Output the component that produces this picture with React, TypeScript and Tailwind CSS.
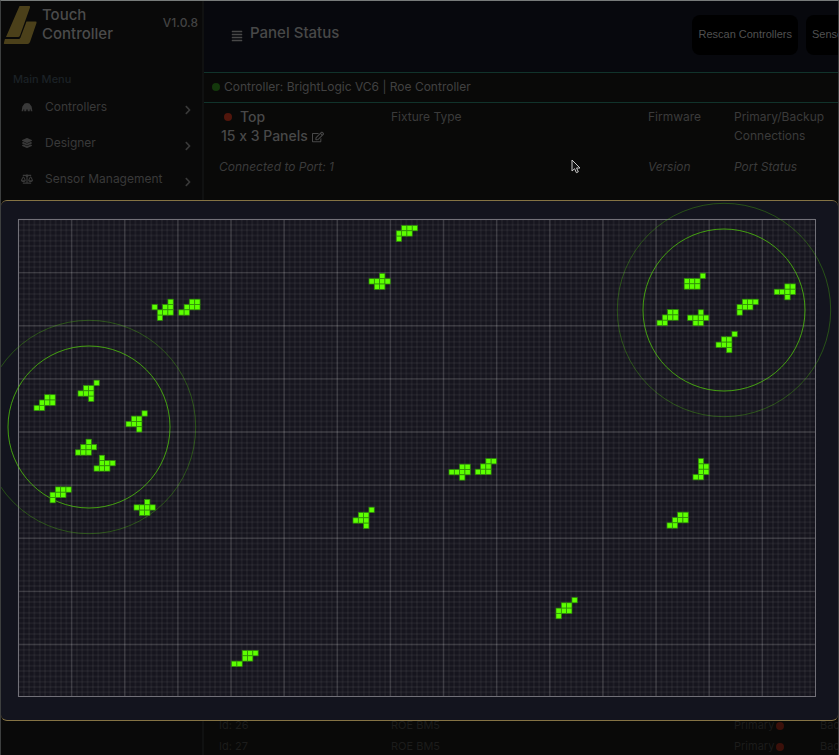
import React from 'react';
import { FaAlignJustify, FaBalanceScale, FaChevronRight, FaLayerGroup, FaRegEdit } from 'react-icons/fa';

interface Blob {
  x: number;
  y: number;
  rows: string[];
}

const PANEL = 53.13;
const CELL = 5.313;
const GRID_W = 797;
const GRID_H = 478;

// Touch footprints, one character per sensor pixel
const SLANT = ['..##', '.###', '##..'];
const SPARK = ['...#', '.##.', '###.', '..#.'];
const WEDGE = ['.###', '###.', '#...'];
const CROSS = ['..#.', '####', '.##.'];
const HAMMER = ['..##', '####', '..#.'];

const blobs: Blob[] = [
  { x: 16, y: 175.5, rows: SLANT },
  { x: 60, y: 161, rows: SPARK },
  { x: 108, y: 191.6, rows: SPARK },
  { x: 57.4, y: 220, rows: ['..#.', '.###', '###.'] },
  { x: 76, y: 236, rows: ['.#..', '.###', '###.'] },
  { x: 32, y: 267.7, rows: WEDGE },
  { x: 116, y: 280.3, rows: CROSS },
  { x: 666.2, y: 54, rows: ['...#', '###.', '###.'] },
  { x: 756.2, y: 64.7, rows: HAMMER },
  { x: 719, y: 80, rows: WEDGE },
  { x: 639, y: 90.4, rows: SLANT },
  { x: 669.6, y: 90.6, rows: CROSS },
  { x: 698, y: 112.3, rows: SPARK },
  { x: 378.3, y: 6.3, rows: WEDGE },
  { x: 351, y: 54.2, rows: CROSS },
  { x: 134, y: 80, rows: ['...#', '#.##', '.###', '.#..'] },
  { x: 160.8, y: 80, rows: SLANT },
  { x: 431, y: 245, rows: HAMMER },
  { x: 457.2, y: 239.4, rows: ['..##', '.##.', '###.'] },
  { x: 335, y: 288, rows: SPARK },
  { x: 675, y: 239.4, rows: ['.#.', '.##', '.##', '##.'] },
  { x: 649, y: 293, rows: SLANT },
  { x: 538, y: 378.3, rows: ['...#', '.##.', '###.', '#...'] },
  { x: 213.6, y: 431.3, rows: ['..###', '..##.', '##...'] },
];

const hands = [
  { x: 71, y: 208 },
  { x: 706, y: 91 },
];

const range = (n: number) => Array.from({ length: n }, (_, i) => i);

const TouchGrid: React.FC = () => (
  <svg viewBox="0 0 798 478" className="block w-full overflow-visible" role="img">
    <rect x="0" y="0" width={GRID_W} height={GRID_H} fill="#16151e" />
    <g stroke="#ffffff" strokeOpacity="0.042" strokeWidth="2">
      {range(150).map((i) => (
        <line key={`v${i}`} x1={0.5 + i * CELL} x2={0.5 + i * CELL} y1="0" y2={GRID_H} />
      ))}
      {range(90).map((i) => (
        <line key={`h${i}`} x1="0" x2={GRID_W} y1={0.5 + i * CELL} y2={0.5 + i * CELL} />
      ))}
    </g>
    <g stroke="#ffffff" strokeOpacity="0.12" strokeWidth="1.4">
      {range(14).map((i) => (
        <line key={`v${i}`} x1={0.5 + (i + 1) * PANEL} x2={0.5 + (i + 1) * PANEL} y1="0" y2={GRID_H} />
      ))}
      {range(8).map((i) => (
        <line key={`h${i}`} x1="0" x2={GRID_W} y1={0.5 + (i + 1) * PANEL} y2={0.5 + (i + 1) * PANEL} />
      ))}
    </g>
    <rect x="0.5" y="0.5" width={GRID_W} height={GRID_H - 1} fill="none" stroke="#717078" />
    {hands.map((hand) => (
      <g key={hand.x} fill="none" stroke="#52cc0b">
        <circle cx={hand.x} cy={hand.y} r="81" strokeOpacity="0.75" />
        <circle cx={hand.x} cy={hand.y} r="106.7" strokeOpacity="0.33" />
      </g>
    ))}
    {blobs.map((blob, b) => (
      <g key={b} fill="#5cff00" stroke="#2f8a0a" strokeWidth="0.7">
        {blob.rows.flatMap((row, r) =>
          row.split('').map((cell, c) =>
            cell === '#' ? (
              <rect key={`${r}-${c}`} x={blob.x + c * CELL} y={blob.y + 0.2 + r * CELL} width={CELL} height={CELL} />
            ) : null
          )
        )}
      </g>
    ))}
  </svg>
);

const HubIcon: React.FC<{ className?: string }> = ({ className }) => (
  <svg viewBox="0 0 12 10" className={className} fill="currentColor">
    <path d="M3.6 1.6Q6 .4 8.400 1.600l2.200 2.800.8 4.800H9.700V7.600h-.9v1.600H6.700V7.600H5.300v1.600H3.200V7.600h-.9v1.600H.6l.8-4.800z" />
  </svg>
);

const Logo: React.FC = () => (
  <svg viewBox="0 0 37 40" className="h-10 w-[37px] shrink-0" fill="#4b401a">
    <path d="M16.5 1H26q1.500 0 1 1.400L17 30.500q-.6 1.500-2 1.500H3z" />
    <path d="M23.500 16.500H32.500q1.500 0 1 1.400L27 37q-.8 2-2.500 2H1.500q-1 0-.6-1l1-4H15.500q1.400 0 1.900-1.300z" />
  </svg>
);

const menu = [
  { label: 'Controllers', icon: HubIcon },
  { label: 'Designer', icon: FaLayerGroup },
  { label: 'Sensor Management', icon: FaBalanceScale },
];

const Sidebar: React.FC = () => (
  <aside className="w-[203px] shrink-0 border-r-2 border-[#101111] bg-[#090909]">
    <div className="flex items-start pt-1 pl-0.5 pr-1">
      <Logo />
      <h1 className="ml-0.5 flex-1 text-[15px] leading-[19px] font-medium text-[#4b4b4b]">
        Touch
        <br />
        Controller
      </h1>
      <span className="pt-2 text-xs leading-5 font-medium text-[#434343]">V1.0.8</span>
    </div>
    <p className="mt-6 pl-3 text-[11px] leading-5 font-medium text-[#1b2126]">Main Menu</p>
    <nav>
      {menu.map(({ label, icon: Icon }) => (
        <a key={label} href="#" className="flex h-9 items-center pr-2.5 pl-5 text-[#393939]">
          <Icon className="h-2.5 w-3" />
          <span className="ml-3 flex-1 text-xs whitespace-nowrap">{label}</span>
          <FaChevronRight className="mt-1.5 h-2.5 w-2" />
        </a>
      ))}
    </nav>
  </aside>
);

const Columns: React.FC = () => (
  <colgroup>
    <col className="w-[172px]" />
    <col />
    <col className="w-[86px]" />
    <col className="w-[104px]" />
  </colgroup>
);

const Main: React.FC = () => (
  <main className="flex min-w-0 flex-1 flex-col bg-[#090908]">
    <header className="flex h-[72px] items-center justify-between border-b border-[#11332b] bg-[#07080d] pl-[27px]">
      <div className="flex items-center gap-[7px] pb-1.5 text-[#484848]">
        <FaAlignJustify className="mt-1 h-3 w-3" />
        <h2 className="text-[15px] font-medium">Panel Status</h2>
      </div>
      <div className="-mr-10 flex shrink-0 gap-2 pb-1 font-['Liberation_Sans',sans-serif] text-[11px] text-[#505050]">
        <button className="h-10 rounded-lg bg-black px-1.5 whitespace-nowrap">Rescan Controllers</button>
        <button className="h-10 w-[72px] rounded-lg bg-black px-1.5 text-left whitespace-nowrap">Sensor</button>
      </div>
    </header>
    <div className="flex h-[30px] items-center gap-1 border-b border-[#11332b] pb-0.5 pl-2 text-xs text-[#414141]">
      <span className="h-2 w-2 rounded-full bg-[#14380c]" />
      <span>Controller: BrightLogic VC6 | Roe Controller</span>
    </div>
    <div className="pl-[15px]">
      <table className="w-full table-fixed text-left text-xs leading-[19px] whitespace-nowrap text-[#3b3b3b]">
        <Columns />
        <thead>
          <tr className="align-top">
            <th className="pt-1 text-sm leading-[19px] font-medium text-[#484848]">
              <span className="flex items-center pl-[5px]">
                <span className="mr-2 h-2 w-2 rounded-full bg-[#51160c]" />
                Top
              </span>
              <span className="flex items-center gap-1 pl-0.5">
                15 x 3 Panels
                <FaRegEdit className="mt-0.5 h-3 w-3" />
              </span>
            </th>
            <th className="pt-1 font-normal">Fixture Type</th>
            <th className="pt-1 font-normal">Firmware</th>
            <th className="pt-1 font-normal">
              Primary/Backup
              <br />
              Connections
            </th>
          </tr>
        </thead>
        <tbody>
          <tr className="italic">
            <td className="pt-3">Connected to Port: 1</td>
            <td />
            <td className="pt-3">Version</td>
            <td className="pt-3">Port Status</td>
          </tr>
        </tbody>
      </table>
    </div>
    <div className="-mb-0.5 mt-auto pl-[15px]">
      <table className="w-full table-fixed text-left text-[11px] leading-[21px] whitespace-nowrap text-[#1c1c1b]">
        <Columns />
        <tbody>
          {[26, 27].map((id) => (
            <tr key={id}>
              <td>Id: {id}</td>
              <td>ROE BM5</td>
              <td />
              <td>
                <span className="flex items-center">
                  <span className="w-[42px] shrink-0">Primary</span>
                  <span className="mr-9 h-2 w-2 shrink-0 rounded-full bg-[#3b100a]" />
                  Backup
                </span>
              </td>
            </tr>
          ))}
        </tbody>
      </table>
    </div>
  </main>
);

const App: React.FC = () => {
  return (
    <div className="relative flex min-h-screen overflow-hidden border-x border-t border-x-[#3d3f3f] border-t-[#777b7a] bg-[#090909] font-['Inter',sans-serif] [font-feature-settings:'calt'_0]">
      <Sidebar />
      <Main />

      {/* Live sensor view */}
      <section
        role="dialog"
        aria-modal="true"
        className="absolute inset-x-0 top-[199px] overflow-hidden rounded-md border-y border-[#857344] bg-[#13141e] pt-[18px] pr-[22px] pb-[23px] pl-[17px]"
      >
        <TouchGrid />
      </section>

      {/* Pointer */}
      <svg viewBox="0 0 10 15" className="absolute top-[158px] left-[570px] h-[15px] w-2.5">
        <path d="M1 1v11l2.600-2.300 1.800 4 1.900-.9-1.700-3.800H9z" fill="#111111" stroke="#c9c9c9" strokeLinejoin="round" />
      </svg>
    </div>
  );
};

export default App;
